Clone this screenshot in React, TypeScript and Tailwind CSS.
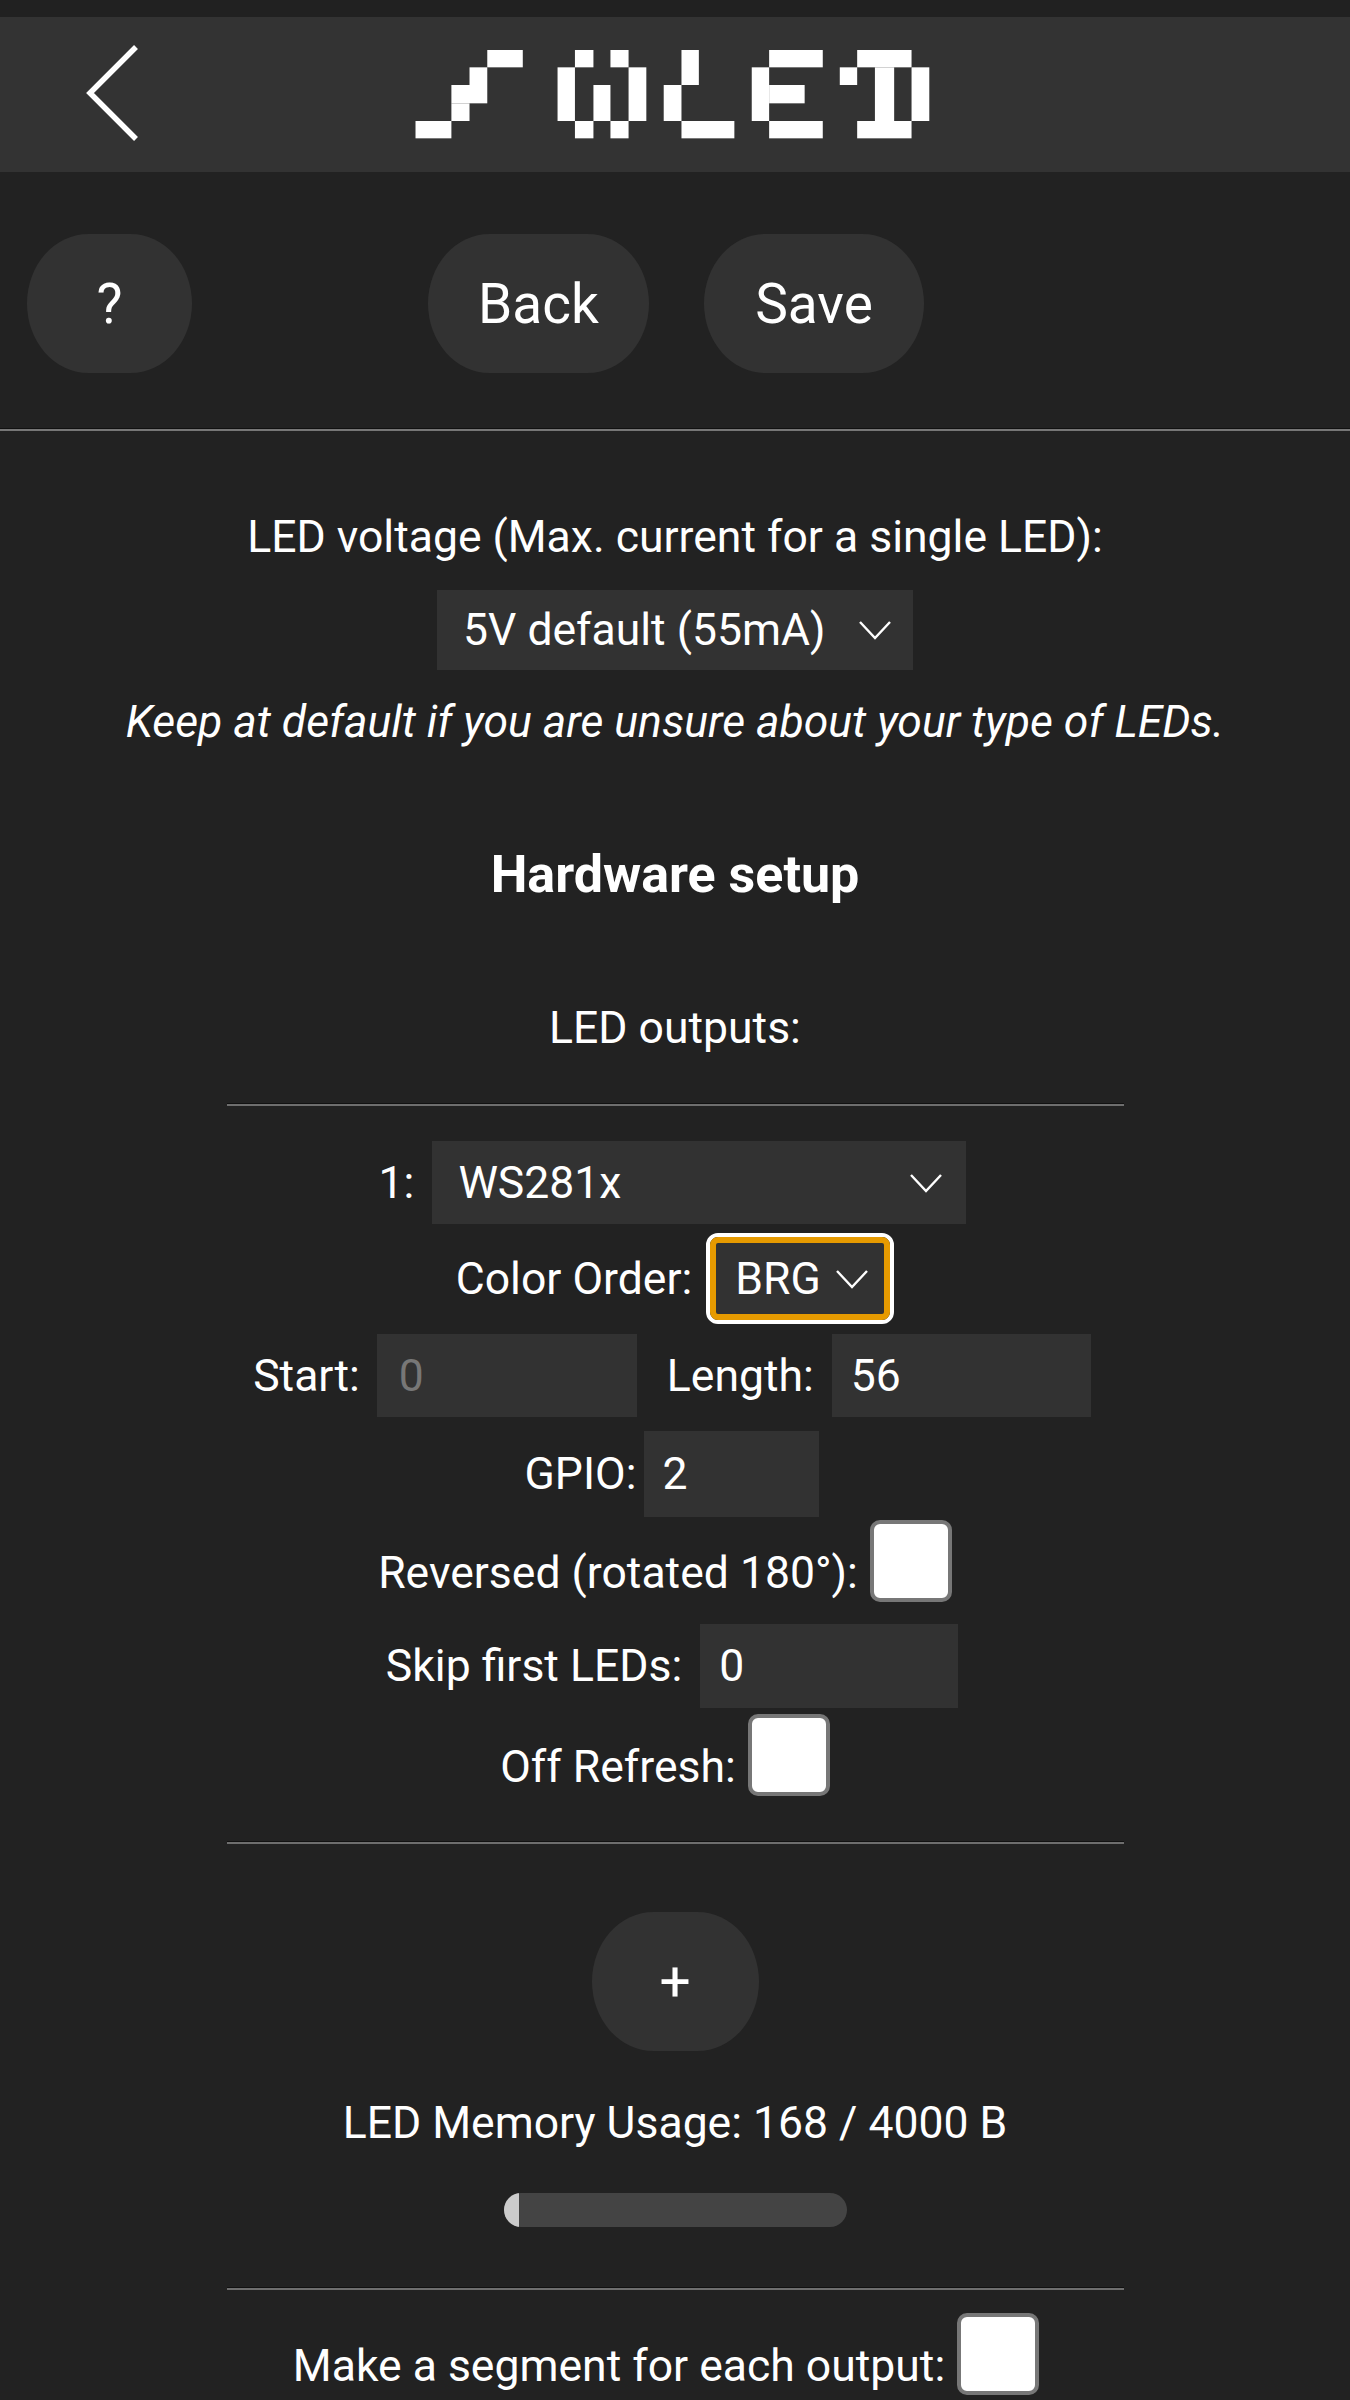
const logoRects = [
  // slash
  [290, 90, 96, 52], [242, 142, 48, 53], [193, 195, 97, 55], [193, 250, 49, 53], [96, 303, 97, 52],
  // W
  [527, 90, 50, 52], [623, 90, 49, 52], [480, 142, 47, 161], [577, 195, 46, 108], [672, 142, 48, 161], [527, 303, 50, 52], [623, 303, 49, 52],
  // L
  [815, 90, 47, 105], [767, 195, 48, 108], [815, 303, 143, 52],
  // E
  [1052, 90, 145, 52], [1005, 142, 47, 161], [1052, 195, 96, 55], [1052, 303, 145, 52],
  // D
  [1290, 90, 147, 52], [1243, 142, 47, 53], [1338, 142, 52, 161], [1437, 142, 48, 161], [1290, 303, 147, 52],
];

function Logo() {
  return (
    <svg viewBox="0 0 1568 420" preserveAspectRatio="none" className="w-[580px] h-[140px]" fill="#fff">
      {logoRects.map(([x, y, w, h], i) => (
        <rect key={i} x={x} y={y} width={w} height={h} />
      ))}
    </svg>
  );
}

function Pill({ label, className }: { label: string; className: string }) {
  return (
    <button className={`h-[139px] rounded-[62px/70px] bg-[#323232] flex items-center justify-center text-[#fff] ${className}`}>
      {label}
    </button>
  );
}

function Chevron() {
  return (
    <svg viewBox="0 0 32 20" className="w-[32px] h-[20px]" fill="none" stroke="#fff" strokeWidth="2.4">
      <path d="M1 2 L16 18 L31 2" />
    </svg>
  );
}

function Select({ value, className }: { value: string; className: string }) {
  return (
    <div className={`flex items-center justify-between bg-[#323232] ${className}`}>
      <span>{value}</span>
      <Chevron />
    </div>
  );
}

function Field({ value, className }: { value: string; className: string }) {
  return <div className={`flex items-center bg-[#323232] ${className}`}>{value}</div>;
}

function Check() {
  return <div className="w-[82px] h-[82px] rounded-[10px] bg-white border-[4px] border-[#777]" />;
}

function Rule() {
  return <div className="w-[897px] h-[3px] border-t border-[#111] bg-[#6e6e6e] mx-auto" />;
}

export default function App() {
  return (
    <div className="w-[1350px] h-[2400px] overflow-hidden bg-[#222] text-[#fff] text-[44.5px] leading-[46px] font-['Roboto',sans-serif]">
      <div className="h-[17px] bg-[#212121]" />
      <header className="h-[155px] bg-[#333] relative flex items-start">
        <svg viewBox="0 0 60 100" className="w-[60px] h-[100px] mt-[26px] ml-[82px]" fill="none" stroke="#fff" strokeWidth="5.5" strokeLinejoin="miter">
          <path d="M54 4 L8 50 L54 96" />
        </svg>
        <div className="absolute left-[380px] top-[3px]">
          <Logo />
        </div>
      </header>

      <div className="flex items-center mt-[62px] text-[55px]">
        <Pill label="?" className="w-[165px] ml-[27px]" />
        <Pill label="Back" className="w-[221px] ml-[236px]" />
        <Pill label="Save" className="w-[220px] ml-[55px]" />
      </div>

      <div className="h-[3px] border-t border-[#111] bg-[#777] mt-[55px]" />

      <p className="text-center mt-[83px]">LED voltage (Max. current for a single LED):</p>
      <div className="flex justify-center mt-[30px]">
        <Select value="5V default (55mA)" className="w-[476px] h-[80px] pl-[26px] pr-[22px]" />
      </div>
      <p className="text-center italic mt-[29px]">Keep at default if you are unsure about your type of LEDs.</p>

      <h2 className="text-center font-bold text-[52px] leading-[56px] mt-[102px]">Hardware setup</h2>
      <p className="text-center mt-[102px]">LED outputs:</p>

      <div className="mt-[52px]">
        <Rule />
      </div>

      <div className="flex justify-center items-center gap-[18px] mt-[35px] pr-[5px]">
        <span>1:</span>
        <Select value="WS281x" className="w-[534px] h-[83px] pl-[26px] pr-[24px]" />
      </div>
      <div className="flex justify-center items-center gap-[14px] mt-[9px]">
        <span>Color Order:</span>
        <div className="w-[188px] h-[91px] rounded-[12px] border-[4px] border-white">
          <Select value="BRG" className="h-full rounded-[8px] border-[6px] border-[#e69a00] bg-[#262626] pl-[19px] pr-[16px]" />
        </div>
      </div>
      <div className="flex justify-center items-center mt-[10px] pr-[6px]">
        <span>Start:</span>
        <Field value="0" className="w-[260px] h-[83px] ml-[17px] pl-[22px] text-[#777]" />
        <span className="ml-[30px]">Length:</span>
        <Field value="56" className="w-[259px] h-[83px] ml-[18px] pl-[19px]" />
      </div>
      <div className="flex justify-center items-center gap-[8px] mt-[14px] pr-[6px]">
        <span>GPIO:</span>
        <Field value="2" className="w-[175px] h-[86px] pl-[18px]" />
      </div>
      <div className="flex justify-center items-center gap-[12px] mt-[3px] pr-[20px]">
        <span className="mt-[24px]">Reversed (rotated 180°):</span>
        <Check />
      </div>
      <div className="flex justify-center items-center gap-[18px] mt-[22px] pr-[6px]">
        <span>Skip first LEDs:</span>
        <Field value="0" className="w-[258px] h-[84px] pl-[19px]" />
      </div>
      <div className="flex justify-center items-center gap-[12px] mt-[6px] pr-[20px]">
        <span className="mt-[24px]">Off Refresh:</span>
        <Check />
      </div>

      <div className="mt-[45px]">
        <Rule />
      </div>

      <div className="flex justify-center mt-[68px] text-[55px]">
        <Pill label="+" className="w-[167px]" />
      </div>
      <p className="text-center mt-[49px]">LED Memory Usage: 168 / 4000 B</p>
      <div className="w-[343px] h-[34px] mx-auto mt-[47px] rounded-[17px] bg-[#444] overflow-hidden">
        <div className="w-[15px] h-full bg-[#ccc]" />
      </div>
      <div className="mt-[60px]">
        <Rule />
      </div>
      <div className="flex justify-center items-center gap-[12px] mt-[23px] pr-[18px]">
        <span className="mt-[24px]">Make a segment for each output:</span>
        <Check />
      </div>
    </div>
  );
}
